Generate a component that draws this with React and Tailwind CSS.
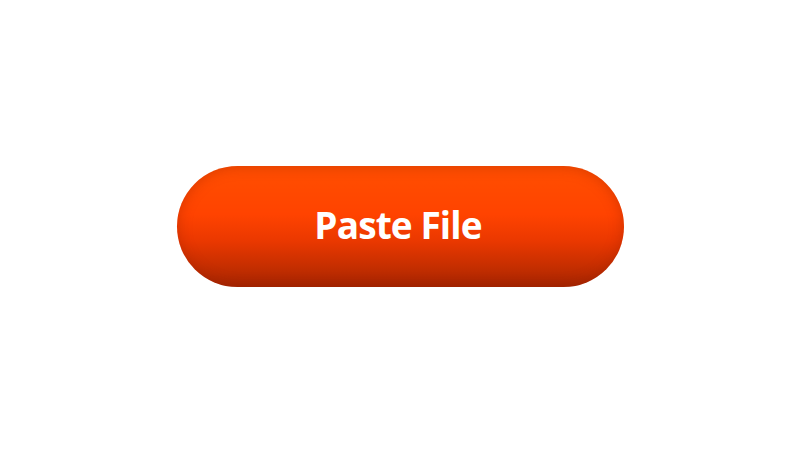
const App = () => {
    return (
        <div className="w-[800px] h-[450px] bg-white flex items-center justify-center">
            <button className="w-[447px] h-[121px] mt-[3px] pb-[4px] pr-[4px] rounded-full bg-[linear-gradient(180deg,#ff4f00_0%,#ff4300_40%,#ea3800_62%,#bd2c00_88%,#a32400_100%)] shadow-[inset_0_0_14px_rgba(150,30,0,0.4)] text-white font-bold text-[37px] tracking-[-0.9px] font-['Open_Sans',sans-serif]">
                Paste File
            </button>
        </div>
    );
};
export default App;
